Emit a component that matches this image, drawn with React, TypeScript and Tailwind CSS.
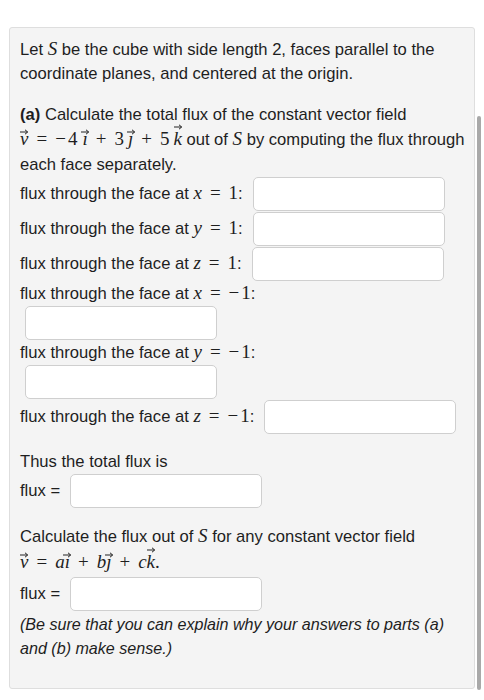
import React from "react";

const serif = { fontFamily: '"Liberation Serif", "DejaVu Serif", serif' };

function V({ children }: { children: React.ReactNode }) {
  return (
    <span className="italic text-[19px] leading-none" style={serif}>
      {children}
    </span>
  );
}

function N({ children }: { children: React.ReactNode }) {
  return (
    <span className="text-[19px] leading-none" style={serif}>
      {children}
    </span>
  );
}

function Minus() {
  return (
    <span className="text-[19px] leading-none mr-[2px]" style={serif}>
      −
    </span>
  );
}

function Op({ children }: { children: React.ReactNode }) {
  return (
    <span className="text-[19px] leading-none mx-[8px]" style={serif}>
      {children}
    </span>
  );
}

function Vec({
  children,
  tall = false,
}: {
  children: React.ReactNode;
  tall?: boolean;
}) {
  return (
    <span className="relative inline-block leading-none">
      <span className="italic text-[19px] leading-none" style={serif}>
        {children}
      </span>
      <svg
        className={
          "absolute left-1/2 -translate-x-1/2 " + (tall ? "top-[-5px]" : "top-[0px]")
        }
        width="9"
        height="6"
        viewBox="0 0 9 6"
      >
        <path
          d="M0.5 3 H8 M5.5 0.8 L8.2 3 L5.5 5.2"
          stroke="#222"
          strokeWidth="1"
          fill="none"
        />
      </svg>
    </span>
  );
}

function Box({ className = "" }: { className?: string }) {
  return (
    <div
      className={
        "w-[192px] h-[34px] bg-white border border-[#cfcfcf] rounded-[5px] shrink-0 " +
        className
      }
    />
  );
}

function Row({ children, gap = "mr-[10px]" }: { children: React.ReactNode; gap?: string }) {
  return (
    <div className="flex items-start h-[35px] whitespace-nowrap">
      <span className={"leading-[34px] " + gap}>{children}</span>
      <Box />
    </div>
  );
}

export default function App() {
  return (
    <div
      className="relative bg-white min-h-[700px] w-[484px] text-[#1e1e1e]"
      style={{ fontFamily: '"Liberation Sans", Arial, sans-serif' }}
    >
      <div className="pt-[27px] pl-[9px] w-[475px]">
        <div className="border border-[#dedede] bg-[#f4f4f4] rounded-[3px] pl-[10px] pr-[8px] pt-[10px] pb-[28px] text-[16.6px] leading-[24px]">
          <div className="whitespace-nowrap">
            Let <V>S</V> be the cube with side length 2, faces parallel to the
          </div>
          <div className="whitespace-nowrap">
            coordinate planes, and centered at the origin.
          </div>

          <div className="mt-[17px] whitespace-nowrap">
            <b>(a)</b> Calculate the total flux of the constant vector field
          </div>
          <div className="whitespace-nowrap leading-[26px]">
            <Vec>v</Vec>
            <Op>=</Op>
            <Minus />
            <N>4</N>
            <span className="ml-[5px]">
              <Vec>ı</Vec>
            </span>
            <Op>+</Op>
            <N>3</N>
            <span className="ml-[4px]">
              <Vec>ȷ</Vec>
            </span>
            <Op>+</Op>
            <N>5</N>
            <span className="ml-[4px]">
              <Vec tall>k</Vec>
            </span>{" "}
            out of <V>S</V> by computing the flux through
          </div>
          <div className="whitespace-nowrap">each face separately.</div>

          <Row>
            flux through the face at <V>x</V>
            <Op>=</Op>
            <N>1</N>:
          </Row>
          <Row>
            flux through the face at <V>y</V>
            <Op>=</Op>
            <N>1</N>:
          </Row>
          <Row>
            flux through the face at <V>z</V>
            <Op>=</Op>
            <N>1</N>:
          </Row>
          <div className="whitespace-nowrap">
            flux through the face at <V>x</V>
            <Op>=</Op>
            <Minus />
            <N>1</N>:
          </div>
          <div className="h-[35px]">
            <Box className="ml-[5px]" />
          </div>
          <div className="whitespace-nowrap">
            flux through the face at <V>y</V>
            <Op>=</Op>
            <Minus />
            <N>1</N>:
          </div>
          <div className="h-[35px]">
            <Box className="ml-[5px]" />
          </div>
          <Row>
            flux through the face at <V>z</V>
            <Op>=</Op>
            <Minus />
            <N>1</N>:
          </Row>

          <div className="mt-[15px] whitespace-nowrap">Thus the total flux is</div>
          <Row gap="mr-[10px]">flux =</Row>

          <div className="mt-[16px] whitespace-nowrap">
            Calculate the flux out of <V>S</V> for any constant vector field
          </div>
          <div className="whitespace-nowrap leading-[28px]">
            <Vec>v</Vec>
            <Op>=</Op>
            <V>a</V>
            <Vec>ı</Vec>
            <Op>+</Op>
            <V>b</V>
            <Vec>ȷ</Vec>
            <Op>+</Op>
            <V>c</V>
            <Vec tall>k</Vec>
            <N>.</N>
          </div>
          <Row gap="mr-[10px]">flux =</Row>
          <div className="italic whitespace-nowrap text-[16.1px]">
            (Be sure that you can explain why your answers to parts (a)
          </div>
          <div className="italic whitespace-nowrap text-[16.1px]">
            and (b) make sense.)
          </div>
        </div>
      </div>
      <div className="absolute left-[477px] top-[116px] w-[4px] h-[574px] bg-[#a9a9a9] rounded-[2px]" />
    </div>
  );
}
